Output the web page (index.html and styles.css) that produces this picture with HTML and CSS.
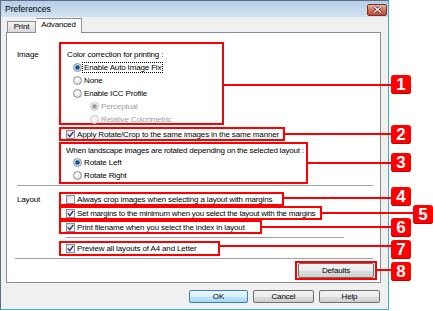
FILE: index.html
```html
<!DOCTYPE html>
<html>
<head>
<meta charset="utf-8">
<link rel="stylesheet" href="styles.css">
</head>
<body>
<div class="page">
  <div class="window">
    <div class="titlebar">
      <span class="title">Preferences</span>
      <span class="close"><svg width="9" height="7" viewBox="0 0 9 7"><path d="M1 0.5 L8 6.5 M8 0.5 L1 6.5" stroke="#4a1a14" stroke-width="2.6"/><path d="M1 0.5 L8 6.5 M8 0.5 L1 6.5" stroke="#fff" stroke-width="1.4"/></svg></span>
    </div>
    <div class="client">
      <div class="tabs">
        <div class="tab">Print</div>
        <div class="tab active">Advanced</div>
      </div>
      <div class="panel">
        <div class="section sec-image">
          <div class="label label-image">Image</div>
          <div class="groups">
            <div class="box b1">
              <div class="row">Color correction for printing :</div>
              <div class="row opt"><span class="rd on"></span><span class="focus">Enable Auto Image Fix</span></div>
              <div class="row opt"><span class="rd"></span>None</div>
              <div class="row opt"><span class="rd"></span>Enable ICC Profile</div>
              <div class="row opt sub dis"><span class="rd on"></span>Perceptual</div>
              <div class="row opt sub dis"><span class="rd"></span>Relative Colorimetric</div>
            </div>
            <div class="box b2">
              <div class="row"><span class="cb"><svg width="7" height="7" viewBox="0 0 7 7"><path d="M0.8 3.4 L2.8 5.6 L6.3 0.8" fill="none" stroke="#23367a" stroke-width="1.4"/></svg></span>Apply Rotate/Crop to the same images in the same manner</div>
            </div>
            <div class="box b3">
              <div class="row first">When landscape images are rotated depending on the selected layout :</div>
              <div class="row opt"><span class="rd on"></span>Rotate Left</div>
              <div class="row opt"><span class="rd"></span>Rotate Right</div>
            </div>
          </div>
        </div>
        <div class="sep sep-full"></div>
        <div class="section sec-layout">
          <div class="label label-layout">Layout</div>
          <div class="groups">
            <div class="box b4">
              <div class="row"><span class="cb"></span>Always crop images when selecting a layout with margins</div>
            </div>
            <div class="box b5">
              <div class="row"><span class="cb"><svg width="7" height="7" viewBox="0 0 7 7"><path d="M0.8 3.4 L2.8 5.6 L6.3 0.8" fill="none" stroke="#23367a" stroke-width="1.4"/></svg></span>Set margins to the minimum when you select the layout with the margins</div>
            </div>
            <div class="box b6">
              <div class="row"><span class="cb"><svg width="7" height="7" viewBox="0 0 7 7"><path d="M0.8 3.4 L2.8 5.6 L6.3 0.8" fill="none" stroke="#23367a" stroke-width="1.4"/></svg></span>Print filename when you select the index in layout</div>
            </div>
          </div>
        </div>
        <div class="sep sep-mid"></div>
        <div class="box b7">
          <div class="row"><span class="cb"><svg width="7" height="7" viewBox="0 0 7 7"><path d="M0.8 3.4 L2.8 5.6 L6.3 0.8" fill="none" stroke="#23367a" stroke-width="1.4"/></svg></span>Preview all layouts of A4 and Letter</div>
        </div>
        <div class="sep sep-bottom"></div>
        <div class="box b8">
          <div class="btn btn-defaults">Defaults</div>
        </div>
      </div>
      <div class="buttons">
        <div class="btn btn-ok">OK</div>
        <div class="btn btn-cancel">Cancel</div>
        <div class="btn btn-help">Help</div>
      </div>
    </div>
  </div>

  <div class="annot">
    <div class="ln ln1"></div>
    <div class="ln ln2"></div>
    <div class="ln ln3"></div>
    <div class="ln ln4"></div>
    <div class="ln ln5"></div>
    <div class="ln ln6"></div>
    <div class="ln ln7"></div>
    <div class="ln ln8"></div>
    <div class="bd bd1">1</div>
    <div class="bd bd2">2</div>
    <div class="bd bd3">3</div>
    <div class="bd bd4">4</div>
    <div class="bd bd5">5</div>
    <div class="bd bd6">6</div>
    <div class="bd bd7">7</div>
    <div class="bd bd8">8</div>
  </div>
</div>
</body>
</html>
```

FILE: styles.css
```css
* { box-sizing: border-box; }

body {
  margin: 0;
  background: #fff;
  font-family: "Liberation Sans", Arial, sans-serif;
  font-size: 8px;
  letter-spacing: -0.15px;
  color: #000;
}

.page {
  position: relative;
  width: 433px;
  height: 311px;
  overflow: hidden;
}

.window {
  width: 389px;
  height: 310px;
  border: 1px solid #5f6f80;
  border-right-color: #3fb0d2;
  border-bottom-color: #3fb0d2;
  background: #f0f0f0;
  display: flex;
  flex-direction: column;
}

.titlebar {
  height: 16px;
  flex: none;
  background: linear-gradient(#b6cde8, #d3e2f3);
  display: flex;
  align-items: center;
  justify-content: space-between;
  padding: 0 1px 0 4px;
}

.title {
  font-size: 8.5px;
  letter-spacing: 0;
  color: #000;
}

.close {
  width: 20px;
  height: 12px;
  border: 1px solid #7d3026;
  border-radius: 2px;
  background: linear-gradient(#eab2a4, #d6705e 50%, #c2473a);
  display: flex;
  align-items: center;
  justify-content: center;
  margin-top: 1px;
}

.client {
  flex: 1;
  padding: 1px 7px 0 5px;
  display: flex;
  flex-direction: column;
}

.tabs {
  height: 14px;
  display: flex;
  align-items: flex-end;
  padding-left: 1px;
}

.tab {
  height: 11px;
  width: 29px;
  border: 1px solid #8e8f8f;
  border-bottom: none;
  background: linear-gradient(#f4f4f4, #dadada);
  text-align: center;
  line-height: 10px;
}

.tab.active {
  height: 15px;
  width: 46px;
  background: #fff;
  margin-bottom: -1px;
  position: relative;
  z-index: 1;
  line-height: 12px;
  border-left: none;
}

.panel {
  height: 251px;
  border: 1px solid #898c95;
  background: #fff;
  padding: 9px 0 0 10px;
  display: flex;
  flex-direction: column;
  align-items: flex-start;
}

.section {
  display: flex;
}

.label {
  width: 42px;
  line-height: 13px;
  flex: none;
}

.label-image { margin-top: 6px; }
.label-layout { margin-top: 1px; }

.groups {
  display: flex;
  flex-direction: column;
  align-items: flex-start;
}

.box {
  border: 2px solid #f00;
  flex: none;
}

.row {
  height: 13px;
  display: flex;
  align-items: center;
  white-space: nowrap;
}

.b1 {
  width: 165px;
  height: 83px;
  padding: 4px 0 0 6px;
}

.b1 .opt { padding-left: 6px; }
.b1 .opt.sub { padding-left: 23px; }

.dis { color: #a0a0a0; }

.focus {
  outline: 1px dotted #000;
  outline-offset: 0;
  padding: 0 1px;
  margin-left: -1px;
}

.b2 {
  width: 226px;
  height: 14px;
  margin-top: 2px;
  padding-left: 5px;
}
.b2 .row { height: 10px; }

.b3 {
  width: 249px;
  height: 42px;
  margin-top: 1px;
  padding-left: 5px;
}
.b3 .row.first { height: 12px; letter-spacing: -0.22px; }
.b3 .opt { padding-left: 7px; }

.sep {
  height: 1px;
  background: #a0a0a0;
  flex: none;
}

.sep-full {
  width: 356px;
  margin-top: 1px;
}

.sec-layout { margin-top: 6px; }

.b4, .b5, .b6 {
  height: 14px;
  padding-left: 5px;
}
.b4 .row, .b5 .row, .b6 .row, .b7 .row { height: 10px; }
.b4 { width: 225px; }
.b5 { width: 263px; letter-spacing: -0.26px; }
.b6 { width: 203px; }

.sep-mid {
  width: 278px;
  margin: 3px 0 0 49px;
}

.b7 {
  width: 161px;
  height: 15px;
  margin: 3px 0 0 42px;
  padding-left: 5px;
}
.b7 .row { height: 11px; }

.sep-bottom {
  width: 358px;
  margin: 2px 0 0 -2px;
}

.b8 {
  width: 82px;
  height: 19px;
  margin-top: 2px;
  align-self: flex-end;
  margin-right: 3px;
  display: flex;
  align-items: center;
  justify-content: center;
}

.cb {
  width: 9px;
  height: 9px;
  border: 1px solid #8a8d93;
  background: linear-gradient(135deg, #d9dbe0, #fbfbfb);
  display: inline-flex;
  align-items: center;
  justify-content: center;
  margin-right: 2px;
  flex: none;
}

.rd {
  width: 9px;
  height: 9px;
  border-radius: 50%;
  border: 1px solid #8a8d93;
  background: radial-gradient(circle at 35% 35%, #ffffff, #d4d6da);
  margin-right: 2px;
  flex: none;
}

.rd.on {
  background: radial-gradient(circle, #1d4f86 0 1.4px, #4c9be3 2.2px, #cfe3f4 2.9px, #e6e6e6 3.5px);
}

.dis .rd {
  border-color: #c6c6c6;
  background: #f2f2f2;
}

.dis .rd.on {
  background: radial-gradient(circle, #9a9a9a 0 1.4px, #c8c8c8 2.4px, #f2f2f2 3px);
}

.btn {
  height: 13px;
  border: 1px solid #707070;
  border-radius: 2px;
  background: linear-gradient(#f3f3f3, #ebebeb 50%, #dddddd 51%, #cfcfcf);
  display: flex;
  align-items: center;
  justify-content: center;
}

.btn-defaults {
  width: 76px;
  height: 15px;
}

.buttons {
  display: flex;
  justify-content: flex-end;
  gap: 5px;
  margin-top: 7px;
  padding-right: 1px;
}

.btn-ok {
  width: 59px;
  border-color: #3c7fb1;
  background: linear-gradient(#eaf6fd, #d9f0fc 50%, #bee6fd 51%, #a7d9f5);
}
.btn-cancel, .btn-help { width: 61px; }

/* annotation overlay */
.annot {
  position: absolute;
  inset: 0;
  pointer-events: none;
}

.ln {
  position: absolute;
  height: 2px;
  background: #f00;
}
.ln1 { left: 224px; top: 84px;  width: 168px; }
.ln2 { left: 285px; top: 133px; width: 107px; }
.ln3 { left: 308px; top: 162px; width: 84px; }
.ln4 { left: 283px; top: 197px; width: 109px; }
.ln5 { left: 321px; top: 212px; width: 93px; }
.ln6 { left: 261px; top: 226px; width: 131px; }
.ln7 { left: 219px; top: 245px; width: 173px; }
.ln8 { left: 376px; top: 269px; width: 16px; }

.bd {
  position: absolute;
  width: 20px;
  height: 19px;
  background: #f00;
  border-radius: 3px;
  color: #fff;
  font-family: "Liberation Sans", Arial, sans-serif;
  font-weight: bold;
  font-size: 17px;
  letter-spacing: 0;
  line-height: 19px;
  text-align: center;
  box-shadow: inset 0 -1px 0 #c00000;
}
.bd1 { left: 391px; top: 75px; }
.bd2 { left: 391px; top: 125px; }
.bd3 { left: 391px; top: 153px; }
.bd4 { left: 391px; top: 187px; }
.bd5 { left: 413px; top: 205px; }
.bd6 { left: 391px; top: 218px; }
.bd7 { left: 391px; top: 240px; }
.bd8 { left: 391px; top: 262px; }
```
